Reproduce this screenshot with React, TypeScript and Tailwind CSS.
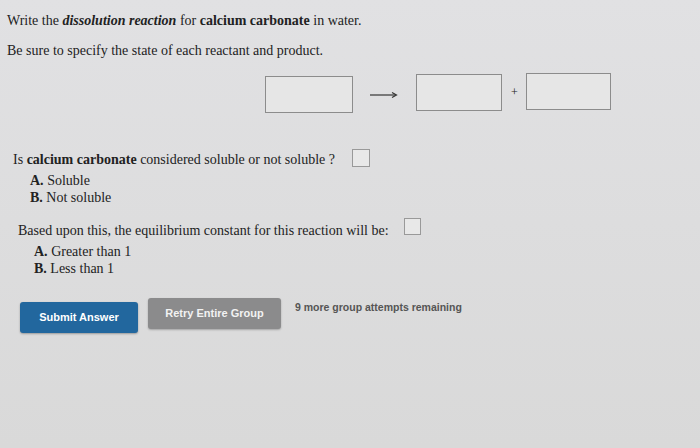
export default function App() {
  const serif = { fontFamily: '"Liberation Serif", "Times New Roman", serif' }
  return (
    <div
      className="w-[700px] h-[448px] overflow-hidden bg-gradient-to-b from-[#e1e1e3] to-[#d9d9d9] text-[#222] relative"
      style={serif}
    >
      <div className="pl-[7px] pt-[12px] text-[14px] leading-[17px]">
        <p>
          Write the <b><i>dissolution reaction</i></b> for <b>calcium carbonate</b> in water.
        </p>
        <p className="mt-[13px]">Be sure to specify the state of each reactant and product.</p>
      </div>

      <div className="flex items-center pl-[265px] mt-[17px]">
        <div className="w-[88px] h-[37px] border border-[#8c8c8c] bg-[#e6e6e6]" />
        <svg width="28" height="8" viewBox="0 0 28 8" className="ml-[17px]">
          <line x1="0" y1="4" x2="26" y2="4" stroke="#333" strokeWidth="1.2" />
          <path d="M22 1.5 L26.5 4 L22 6.5" fill="none" stroke="#333" strokeWidth="1.2" />
        </svg>
        <div className="ml-[18px] w-[86px] h-[37px] border border-[#8c8c8c] bg-[#e6e6e6] -translate-y-[2px]" />
        <span className="ml-[9px] text-[12px] -translate-y-[3px]">+</span>
        <div className="ml-[8px] w-[85px] h-[37px] border border-[#8c8c8c] bg-[#e6e6e6] -translate-y-[3px]" />
      </div>

      <div className="pl-[13px] mt-[37px] text-[14px] leading-[17px]">
        <div className="flex items-center">
          <p>
            Is <b>calcium carbonate</b> considered soluble or not soluble ?
          </p>
          <div className="ml-[17px] w-[18px] h-[18px] border border-[#999] bg-[#e8e8e8] -translate-y-[1px]" />
        </div>
        <div className="pl-[17px] mt-[4px]">
          <p><b>A.</b> Soluble</p>
          <p><b>B.</b> Not soluble</p>
        </div>
      </div>

      <div className="pl-[18px] mt-[16px] text-[14px] leading-[17px]">
        <div className="flex items-center">
          <p>Based upon this, the equilibrium constant for this reaction will be:</p>
          <div className="ml-[15px] w-[17px] h-[17px] border border-[#999] bg-[#e8e8e8] -translate-y-[4px]" />
        </div>
        <div className="pl-[16px] mt-[4px]">
          <p><b>A.</b> Greater than 1</p>
          <p><b>B.</b> Less than 1</p>
        </div>
      </div>

      <div
        className="flex items-start pl-[20px] mt-[21px]"
        style={{ fontFamily: '"Liberation Sans", Arial, sans-serif' }}
      >
        <button className="w-[118px] h-[31px] mt-[4px] rounded-[3px] bg-[#22679e] text-white text-[11px] font-bold shadow-[0_1px_2px_rgba(0,0,0,0.3)]">
          Submit Answer
        </button>
        <button className="ml-[10px] w-[133px] h-[31px] rounded-[3px] bg-[#8b8b8c] text-[#f2f2f2] text-[11px] font-bold shadow-[0_1px_2px_rgba(0,0,0,0.25)]">
          Retry Entire Group
        </button>
        <span className="ml-[14px] mt-[2px] text-[10.5px] font-bold text-[#555]">
          9 more group attempts remaining
        </span>
      </div>
    </div>
  )
}
